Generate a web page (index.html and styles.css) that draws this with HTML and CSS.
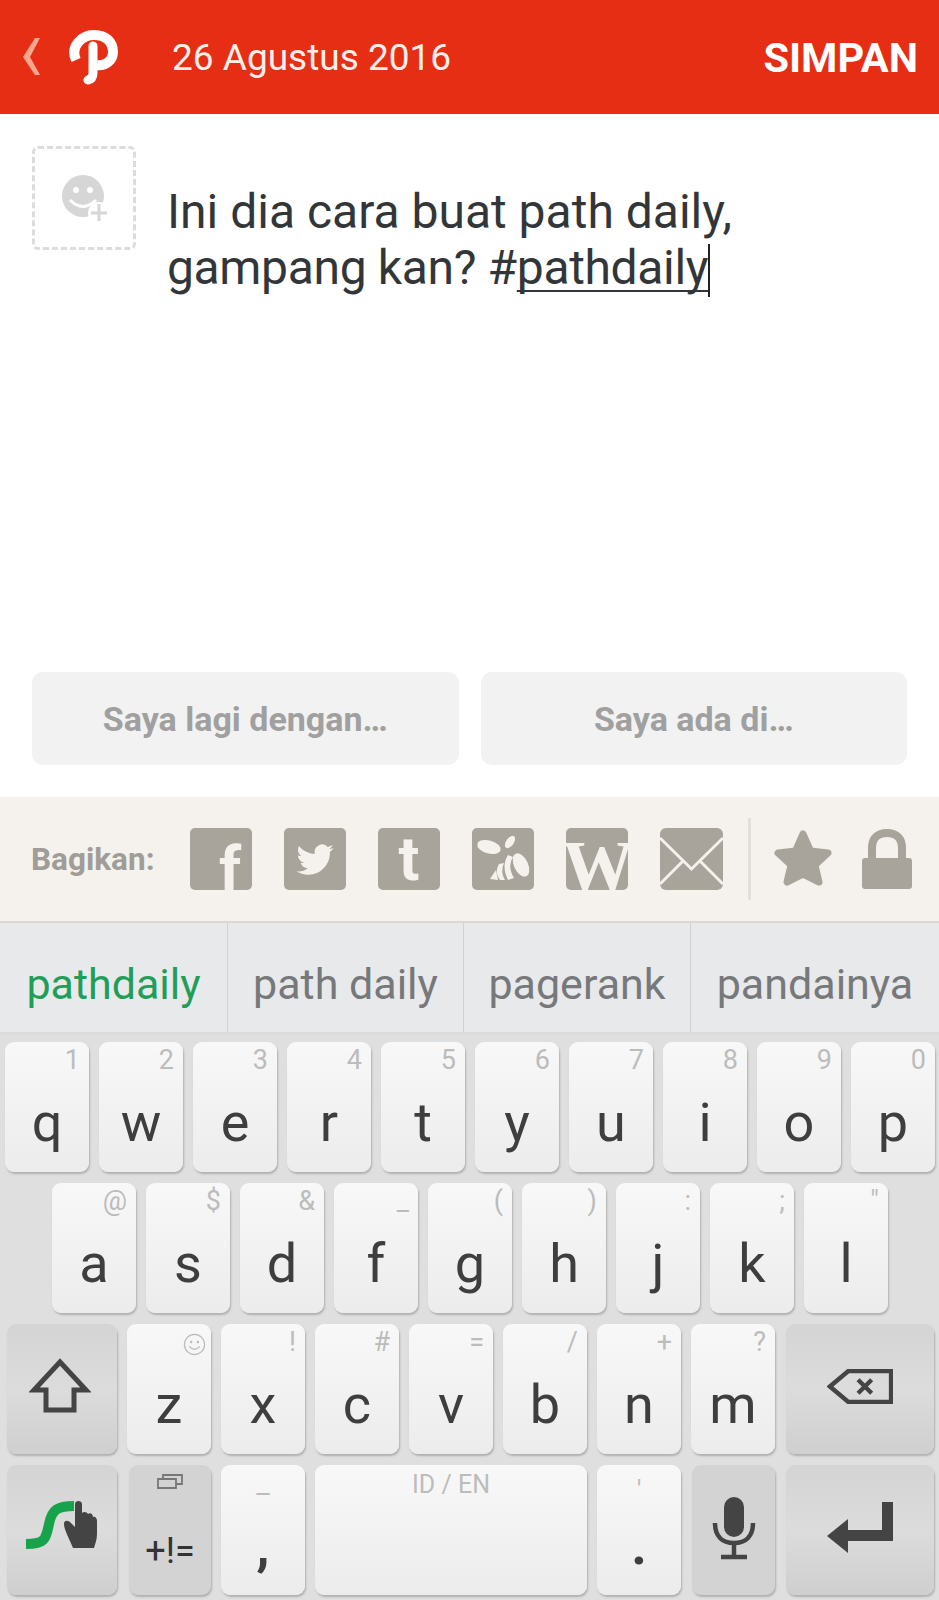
FILE: index.html
```html
<!DOCTYPE html>
<html lang="id">
<head>
<meta charset="utf-8">
<title>Path Daily</title>
<link rel="stylesheet" href="styles.css">
</head>
<body>
<div class="app">
  <header class="topbar">
    <svg class="chevron" viewBox="0 0 20 40" width="20" height="40"><polygon points="18,1 13,1 1,20 13,38 18,38 8,20"/></svg>
    <svg class="logo" viewBox="0 0 52 56" width="52" height="56"><path class="logo-arc" d="M9 31C3 18 14 6 27 6C39 6 46 13 46 23C46 32 38 37 30 36"/><path class="logo-stem" d="M26 17V44Q26 50 21 51"/></svg>
    <div class="date">26 Agustus 2016</div>
    <div class="save">SIMPAN</div>
  </header>

  <main class="compose">
    <div class="entry">
      <div class="sticker">
        <svg viewBox="0 0 60 60" width="60" height="60"><circle cx="25" cy="25" r="21" fill="#d6d6d6"/><circle cx="18" cy="19" r="3" fill="#fff"/><circle cx="32" cy="19" r="3" fill="#fff"/><path d="M12 29Q25 42 38 29" fill="none" stroke="#fff" stroke-width="3"/><circle cx="41" cy="42" r="11" fill="#fff"/><path d="M41 33V50M33 42H49" stroke="#d6d6d6" stroke-width="3"/></svg>
      </div>
      <p class="message">Ini dia cara buat path daily,<br><span class="line-two">gampang kan? #<span class="composing">pathdaily</span></span><span class="caret"></span></p>
    </div>
    <div class="actions">
      <div class="action">Saya lagi dengan…</div>
      <div class="action">Saya ada di…</div>
    </div>
  </main>

  <section class="share">
    <div class="share-label">Bagikan:</div>
    <div class="share-icons">
      <div class="tile tile-f">f</div>
      <svg class="tile-svg" viewBox="0 0 62 62" width="62" height="62"><rect width="62" height="62" rx="5" fill="#a9a49b"/><g transform="translate(12.5 13) scale(1.55)"><path fill="#f5f1ec" d="M23.953 4.57a10 10 0 01-2.825.775 4.958 4.958 0 002.163-2.723c-.951.555-2.005.959-3.127 1.184a4.92 4.92 0 00-8.384 4.482C7.69 8.095 4.067 6.13 1.64 3.162a4.822 4.822 0 00-.666 2.475c0 1.71.87 3.213 2.188 4.096a4.904 4.904 0 01-2.228-.616v.06a4.923 4.923 0 003.946 4.827 4.996 4.996 0 01-2.212.085 4.936 4.936 0 004.604 3.417 9.867 9.867 0 01-6.102 2.105c-.39 0-.779-.023-1.17-.067a13.995 13.995 0 007.557 2.209c9.053 0 13.998-7.496 13.998-13.985 0-.21 0-.42-.015-.63A9.935 9.935 0 0024 4.59z"/></g></svg>
      <div class="tile tile-t">t</div>
      <svg class="tile-svg" viewBox="0 0 62 62" width="62" height="62"><rect width="62" height="62" rx="5" fill="#a9a49b"/><g fill="#f5f1ec"><ellipse cx="17" cy="19" rx="12" ry="6.5" transform="rotate(15 17 19)"/><ellipse cx="38" cy="14" rx="3.8" ry="7" transform="rotate(35 38 14)"/><ellipse cx="49" cy="37" rx="7" ry="12.5" transform="rotate(-25 49 37)"/><path d="M36 27Q29 38 36 52L42 50Q35 38 41 29Z"/><path d="M27 36Q22 44 28 52L33 52Q28 44 32 35Z"/><path d="M24 42L18 51L26 52Z"/></g></svg>
      <div class="tile tile-w">W</div>
      <svg class="tile-svg" viewBox="0 0 63 62" width="63" height="62"><rect width="63" height="62" rx="6" fill="#a9a49b"/><path d="M0 10L31.5 41L63 10M0 56L24 32M63 56L39 32" fill="none" stroke="#f5f1ec" stroke-width="3"/></svg>
    </div>
    <div class="share-divider"></div>
    <svg class="star" viewBox="0 0 60 60" width="60" height="60"><path d="M30 5L37.5 22L55 24L42 36L46 53L30 45L14 53L18 36L5 24L22.5 22Z" fill="#a9a49b" stroke="#a9a49b" stroke-width="7" stroke-linejoin="round"/></svg>
    <svg class="lock" viewBox="0 0 50 60" width="50" height="60"><path d="M10 32V19C10 9 16 4 25 4C34 4 40 9 40 19V32" fill="none" stroke="#a9a49b" stroke-width="8"/><rect y="29" width="50" height="31" rx="3" fill="#a9a49b"/></svg>
  </section>

  <nav class="suggestions">
    <div class="suggestion suggestion-1 suggestion-active">pathdaily</div>
    <div class="suggestion suggestion-2">path daily</div>
    <div class="suggestion suggestion-3">pagerank</div>
    <div class="suggestion suggestion-4">pandainya</div>
  </nav>

  <section class="keyboard">
    <div class="row row-1">
      <div class="key"><span class="hint">1</span><span class="letter">q</span></div>
      <div class="key"><span class="hint">2</span><span class="letter">w</span></div>
      <div class="key"><span class="hint">3</span><span class="letter">e</span></div>
      <div class="key"><span class="hint">4</span><span class="letter">r</span></div>
      <div class="key"><span class="hint">5</span><span class="letter">t</span></div>
      <div class="key"><span class="hint">6</span><span class="letter">y</span></div>
      <div class="key"><span class="hint">7</span><span class="letter">u</span></div>
      <div class="key"><span class="hint">8</span><span class="letter">i</span></div>
      <div class="key"><span class="hint">9</span><span class="letter">o</span></div>
      <div class="key"><span class="hint">0</span><span class="letter">p</span></div>
    </div>
    <div class="row row-2">
      <div class="key"><span class="hint">@</span><span class="letter">a</span></div>
      <div class="key"><span class="hint">$</span><span class="letter">s</span></div>
      <div class="key"><span class="hint">&amp;</span><span class="letter">d</span></div>
      <div class="key"><span class="hint">_</span><span class="letter">f</span></div>
      <div class="key"><span class="hint">(</span><span class="letter">g</span></div>
      <div class="key"><span class="hint">)</span><span class="letter">h</span></div>
      <div class="key"><span class="hint">:</span><span class="letter">j</span></div>
      <div class="key"><span class="hint">;</span><span class="letter">k</span></div>
      <div class="key"><span class="hint">"</span><span class="letter">l</span></div>
    </div>
    <div class="row row-3">
      <div class="key key-fn key-wide key-shift">
        <svg viewBox="0 0 62 58" width="62" height="58"><path d="M31 4L5 32H17V52H45V32H57Z" fill="none" stroke="#444" stroke-width="5"/></svg>
      </div>
      <div class="key"><span class="hint hint-smile"><svg viewBox="0 0 24 24" width="23" height="23"><circle cx="12" cy="12" r="10.5" fill="none" stroke="#bbb" stroke-width="1.3"/><circle cx="8.5" cy="9.5" r="1.3" fill="#bbb"/><circle cx="15.5" cy="9.5" r="1.3" fill="#bbb"/><path d="M6.5 14Q12 20 17.5 14" fill="none" stroke="#bbb" stroke-width="1.3"/></svg></span><span class="letter">z</span></div>
      <div class="key"><span class="hint">!</span><span class="letter">x</span></div>
      <div class="key"><span class="hint">#</span><span class="letter">c</span></div>
      <div class="key"><span class="hint">=</span><span class="letter">v</span></div>
      <div class="key"><span class="hint">/</span><span class="letter">b</span></div>
      <div class="key"><span class="hint">+</span><span class="letter">n</span></div>
      <div class="key"><span class="hint">?</span><span class="letter">m</span></div>
      <div class="key key-fn key-action">
        <svg viewBox="0 0 68 36" width="66" height="35"><path d="M66 2H22L3 18L22 34H66Z" fill="none" stroke="#444" stroke-width="4.5"/><path d="M32 11L46 25M46 11L32 25" stroke="#444" stroke-width="4.5"/></svg>
      </div>
    </div>
    <div class="row row-3">
      <div class="key key-fn key-wide key-swipe">
        <svg viewBox="0 0 72 50" width="72" height="50"><path d="M0 44C20 44 20 38 23 24C26 9 32 6 48 6" fill="none" stroke="#16a34a" stroke-width="10"/><path d="M49 4C49 0 56 0 56 4V13C58 11 61 12 62 14C64 12 67 14 67 17C69 16 71 18 71 21V34C71 40 69 44 68 48H47C44 40 38 30 38 24C38 20 42 20 45 23L49 27Z" fill="#444"/></svg>
      </div>
      <div class="key key-fn key-sym">
        <svg class="sym-icon" viewBox="0 0 28 18" width="28" height="18"><path d="M2 7H20V16H2Z M7 7V3H26V12H20" fill="none" stroke="#777" stroke-width="1.8"/></svg>
        <span class="sym-label">+!=</span>
      </div>
      <div class="key"><span class="hint hint-center hint-dash">–</span><span class="letter letter-punct">,</span></div>
      <div class="key key-space"><span class="hint hint-center hint-lang">ID / EN</span></div>
      <div class="key"><span class="hint hint-center hint-apos">'</span><span class="letter letter-punct">.</span></div>
      <div class="key key-fn key-mic">
        <svg viewBox="0 0 44 64" width="44" height="64"><rect x="12" y="1" width="20" height="40" rx="10" fill="#444"/><path d="M3 27C3 40 10 47 22 47C34 47 41 40 41 27" fill="none" stroke="#444" stroke-width="4.5"/><path d="M22 47V60M9 61H35" stroke="#444" stroke-width="4.5"/></svg>
      </div>
      <div class="key key-fn key-action">
        <svg viewBox="0 0 68 54" width="68" height="54"><path d="M1 35L22 18V29H56V1H67V40H22V52Z" fill="#444"/></svg>
      </div>
    </div>
  </section>
</div>
</body>
</html>
```

FILE: styles.css
```css
* { box-sizing: border-box; }
html, body { margin: 0; padding: 0; background: #fff; }
body { font-family: Roboto, "Noto Sans", sans-serif; }
.app { width: 939px; height: 1600px; overflow: hidden; display: flex; flex-direction: column; }

.topbar { flex: 0 0 114px; background: #e62e14; display: flex; align-items: center; padding: 0 21px 0 22px; color: #fff; }
.chevron { fill: #f9a68f; margin-right: 25px; }
.logo { margin-right: 53px; }
.logo-arc { fill: none; stroke: #fff; stroke-width: 10; }
.logo-stem { fill: none; stroke: #fff; stroke-width: 9; stroke-linecap: round; }
.date { font-size: 37px; color: #fdf0ec; flex: 1; }
.save { font-size: 41.5px; font-weight: 700; }

.compose { flex: 0 0 683px; padding: 32px; display: flex; flex-direction: column; justify-content: space-between; }
.entry { display: flex; }
.sticker { width: 104px; height: 104px; border: 3px dashed #dcdcdc; border-radius: 6px; display: flex; align-items: center; justify-content: center; padding: 6px 0 0 8px; margin-right: 31px; }
.message { margin: 38px 0 0; font-size: 48px; line-height: 56px; color: #333638; }
.line-two { letter-spacing: -0.35px; }
.composing { text-decoration: underline; text-decoration-thickness: 2px; text-underline-offset: 6px; text-decoration-skip-ink: none; }
.caret { display: inline-block; width: 2px; height: 53px; vertical-align: -13px; background: #222; }
.actions { display: flex; gap: 22px; }
.action { flex: 1; height: 93px; border-radius: 11px; background: #f2f2f2; color: #a0a0a0; font-size: 34px; font-weight: 700; display: flex; align-items: center; justify-content: center; }

.share { flex: 0 0 126px; background: #f5f1ec; border-bottom: 2px solid #d9d8d5; display: flex; align-items: center; padding: 0 0 0 31px; }
.share-label { width: 159px; color: #a09d98; font-size: 31.5px; font-weight: 700; }
.share-icons { display: flex; gap: 32px; align-items: center; }
.tile { width: 62px; height: 62px; border-radius: 5px; background: #a9a49b; color: #f5f1ec; display: flex; justify-content: center; }
.tile-svg { display: block; }
.tile-f { font: 700 62px/62px Roboto, sans-serif; padding: 10px 0 0 18px; }
.tile-t { font: 700 62px/62px Roboto, sans-serif; }
.tile-w { font: 700 72px/62px "Liberation Serif", serif; letter-spacing: -2px; padding-top: 7px; }
.share-divider { width: 3px; height: 82px; background: #e3dfda; margin: 0 22px 0 25px; }
.star { margin-right: 29px; }

.suggestions { flex: 0 0 112px; background: #e8e9ea; border-bottom: 3px solid #dcdcdc; display: flex; }
.suggestion { display: flex; align-items: center; justify-content: center; font-size: 43px; color: #76787a; border-right: 1px solid #d0d1d2; padding-top: 12px; }
.suggestion-1 { width: 228px; }
.suggestion-2 { width: 236px; }
.suggestion-3 { width: 227px; }
.suggestion-4 { flex: 1; border-right: 0; }
.suggestion-active { color: #1f9e5a; }

.keyboard { flex: 1; background: #dfdfdf; padding-top: 7px; display: flex; flex-direction: column; gap: 11px; }
.row { display: flex; gap: 10px; height: 130px; }
.row-1 { padding-left: 5px; }
.row-2 { padding-left: 52px; }
.row-3 { padding-left: 7px; }
.key { flex: 0 0 84px; height: 130px; border-radius: 9px; background: linear-gradient(#f8f8f8, #ececec); box-shadow: 1px 2px 2px #b0b0b0; display: flex; flex-direction: column; padding-top: 2px; }
.hint { height: 32px; padding-right: 9px; text-align: right; font-size: 27px; line-height: 32px; color: #bcbcbc; }
.hint-smile { display: block; padding-right: 5px; padding-top: 5px; }
.hint-center { padding-right: 0; text-align: center; }
.hint-dash { padding-top: 12px; }
.hint-apos { padding-top: 8px; }
.hint-lang { font-size: 25px; line-height: 36px; }
.letter { margin-top: 17px; text-align: center; font-size: 54px; line-height: 60px; color: #3e3e3e; }
.letter-punct { font-weight: 700; margin-top: 17px; }
.key-fn { background: linear-gradient(#d4d4d4, #dcdcdc 50%, #cfcfcf); align-items: center; justify-content: center; padding: 0 0 5px; }
.key-wide { flex-basis: 110px; }
.key-shift { padding-right: 4px; }
.key-swipe { padding-bottom: 11px; }
.key-action { flex-basis: 148px; margin-left: 1px; }
.key-sym { margin-left: 2px; flex-basis: 82px; justify-content: flex-start; background: #d3d3d3; padding-top: 7px; }
.sym-label { margin-top: 34px; font-size: 36px; line-height: 54px; color: #333; }
.key-space { flex-basis: 272px; }
.key-mic { flex-basis: 83px; margin-left: 1px; background: #d3d3d3; }
```
